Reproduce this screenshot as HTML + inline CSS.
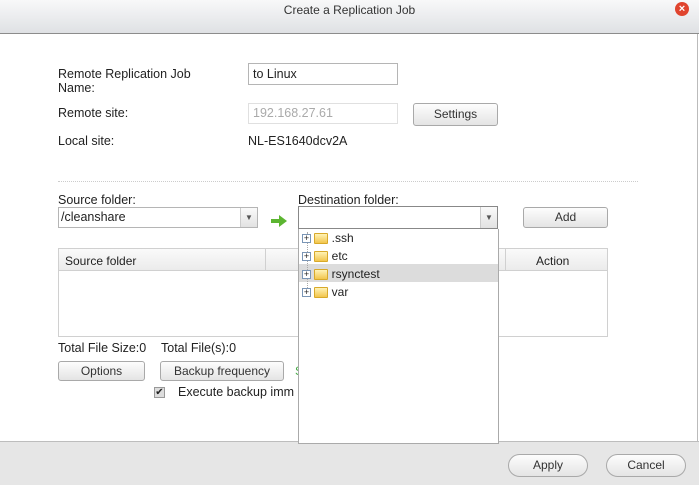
<!DOCTYPE html>
<html><head><style>
*{margin:0;padding:0;box-sizing:border-box}
body{width:699px;height:485px;position:relative;background:#fff;font-family:"Liberation Sans","DejaVu Sans",sans-serif;font-size:12px;color:#222;overflow:hidden}
.a{position:absolute}
.hdr{left:0;top:0;width:699px;height:34px;background:linear-gradient(#f8f8f9,#dfe1e4);border-bottom:1px solid #8c8c8c;text-align:center;line-height:20px;font-size:12px;color:#333}
.btn{position:absolute;border:1px solid #a9a9a9;border-radius:3px;background:linear-gradient(#fdfdfd,#e4e4e4);text-align:center;font-size:12px;color:#333}
.inp{position:absolute;border:1px solid #b5b5b5;background:#fff;padding-left:4px}
.lbl{position:absolute;font-size:12.5px;color:#222}
</style></head><body>
<div class="a hdr">Create a Replication Job</div>
<div class="a" style="left:675px;top:2px;width:14px;height:14px;border-radius:50%;background:#e0442e;color:#fff;font-size:11px;font-weight:bold;line-height:14px;text-align:center">×</div>
<div class="a" style="left:697px;top:34px;width:1px;height:407px;background:#bbb"></div>

<div class="lbl" style="left:58px;top:67px;line-height:14px">Remote Replication Job<br>Name:</div>
<div class="inp" style="left:248px;top:63px;width:150px;height:22px;line-height:20px;font-size:12.5px">to Linux</div>
<div class="lbl" style="left:58px;top:106px">Remote site:</div>
<div class="inp" style="left:248px;top:103px;width:150px;height:21px;line-height:19px;color:#aaa;border-color:#e0e0e0;font-size:12.5px">192.168.27.61</div>
<div class="btn" style="left:413px;top:103px;width:85px;height:23px;line-height:21px">Settings</div>
<div class="lbl" style="left:58px;top:134px">Local site:</div>
<div class="lbl" style="left:248px;top:134px">NL-ES1640dcv2A</div>

<div class="a" style="left:58px;top:181px;width:580px;border-top:1px dotted #ccc"></div>

<div class="lbl" style="left:58px;top:193px">Source folder:</div>
<div class="inp" style="left:58px;top:207px;width:200px;height:21px;line-height:19px;font-size:12.5px;padding-left:2px">/cleanshare</div>
<div class="a" style="left:240px;top:208px;width:17px;height:19px;background:linear-gradient(#fafafa,#e2e2e2);border-left:1px solid #ccc;font-size:8px;text-align:center;line-height:19px;color:#555">▼</div>
<svg class="a" style="left:270px;top:214px" width="18" height="14"><path d="M1 5h8V1l8 6-8 6V9H1z" fill="#5cb531"/></svg>
<div class="lbl" style="left:298px;top:193px">Destination folder:</div>
<div class="inp" style="left:298px;top:206px;width:200px;height:23px;border-color:#888"></div>
<div class="a" style="left:480px;top:207px;width:17px;height:21px;background:linear-gradient(#fafafa,#e2e2e2);border-left:1px solid #ccc;font-size:8px;text-align:center;line-height:21px;color:#555">▼</div>
<div class="btn" style="left:523px;top:207px;width:85px;height:21px;line-height:19px">Add</div>

<div class="a" style="left:58px;top:248px;width:550px;height:89px;border:1px solid #d0d0d0"></div>
<div class="a" style="left:59px;top:249px;width:548px;height:22px;background:linear-gradient(#fafafa,#ebebeb);border-bottom:1px solid #d0d0d0"></div>
<div class="lbl" style="left:65px;top:254px;font-size:12px">Source folder</div>
<div class="a" style="left:265px;top:249px;width:1px;height:22px;background:#d0d0d0"></div>
<div class="a" style="left:505px;top:249px;width:1px;height:22px;background:#d0d0d0"></div>
<div class="lbl" style="left:536px;top:254px;font-size:12px">Action</div>

<div class="lbl" style="left:58px;top:341px">Total File Size:0</div>
<div class="lbl" style="left:161px;top:341px">Total File(s):0</div>
<div class="btn" style="left:58px;top:361px;width:87px;height:20px;line-height:18px">Options</div>
<div class="btn" style="left:160px;top:361px;width:124px;height:20px;line-height:18px">Backup frequency</div>
<div class="a" style="left:295px;top:364px;color:#4a4;font-size:12px">S</div>
<div class="a" style="left:154px;top:387px;width:11px;height:11px;border:1px solid #999;background:#ddd;font-size:10px;line-height:9px;text-align:center">✔</div>
<div class="lbl" style="left:178px;top:385px">Execute backup imm</div>

<div class="a" style="left:0;top:441px;width:699px;height:44px;background:#e6e6e6;border-top:1px solid #bdbdbd"></div>
<div class="btn" style="left:508px;top:454px;width:80px;height:23px;line-height:21px;border-radius:12px">Apply</div>
<div class="btn" style="left:606px;top:454px;width:80px;height:23px;line-height:21px;border-radius:12px">Cancel</div>

<div class="a" style="left:298px;top:229px;width:201px;height:215px;background:#fff;border:1px solid #aaa;border-top:none"></div>
<div class="a" style="left:299px;top:264px;width:199px;height:18px;background:#dcdcdc"></div>
<div class="a" style="left:307px;top:232px;height:64px;border-left:1px dotted #aaa"></div>
<div class="a" style="left:302px;top:229px;width:195px">
 <div style="height:18px;line-height:18px;position:relative"><span style="display:inline-block;width:9px;height:9px;border:1px solid #7a95b5;background:#fff;font-size:9px;line-height:7px;text-align:center;vertical-align:middle">+</span> <span style="display:inline-block;width:14px;height:11px;background:linear-gradient(#fff3b5,#f2c64d);border:1px solid #d8a92a;vertical-align:middle;border-radius:1px"></span> .ssh</div>
 <div style="height:18px;line-height:18px"><span style="display:inline-block;width:9px;height:9px;border:1px solid #7a95b5;background:#fff;font-size:9px;line-height:7px;text-align:center;vertical-align:middle">+</span> <span style="display:inline-block;width:14px;height:11px;background:linear-gradient(#fff3b5,#f2c64d);border:1px solid #d8a92a;vertical-align:middle;border-radius:1px"></span> etc</div>
 <div style="height:18px;line-height:18px"><span style="display:inline-block;width:9px;height:9px;border:1px solid #7a95b5;background:#fff;font-size:9px;line-height:7px;text-align:center;vertical-align:middle">+</span> <span style="display:inline-block;width:14px;height:11px;background:linear-gradient(#fff3b5,#f2c64d);border:1px solid #d8a92a;vertical-align:middle;border-radius:1px"></span> rsynctest</div>
 <div style="height:18px;line-height:18px"><span style="display:inline-block;width:9px;height:9px;border:1px solid #7a95b5;background:#fff;font-size:9px;line-height:7px;text-align:center;vertical-align:middle">+</span> <span style="display:inline-block;width:14px;height:11px;background:linear-gradient(#fff3b5,#f2c64d);border:1px solid #d8a92a;vertical-align:middle;border-radius:1px"></span> var</div>
</div>
</body></html>
